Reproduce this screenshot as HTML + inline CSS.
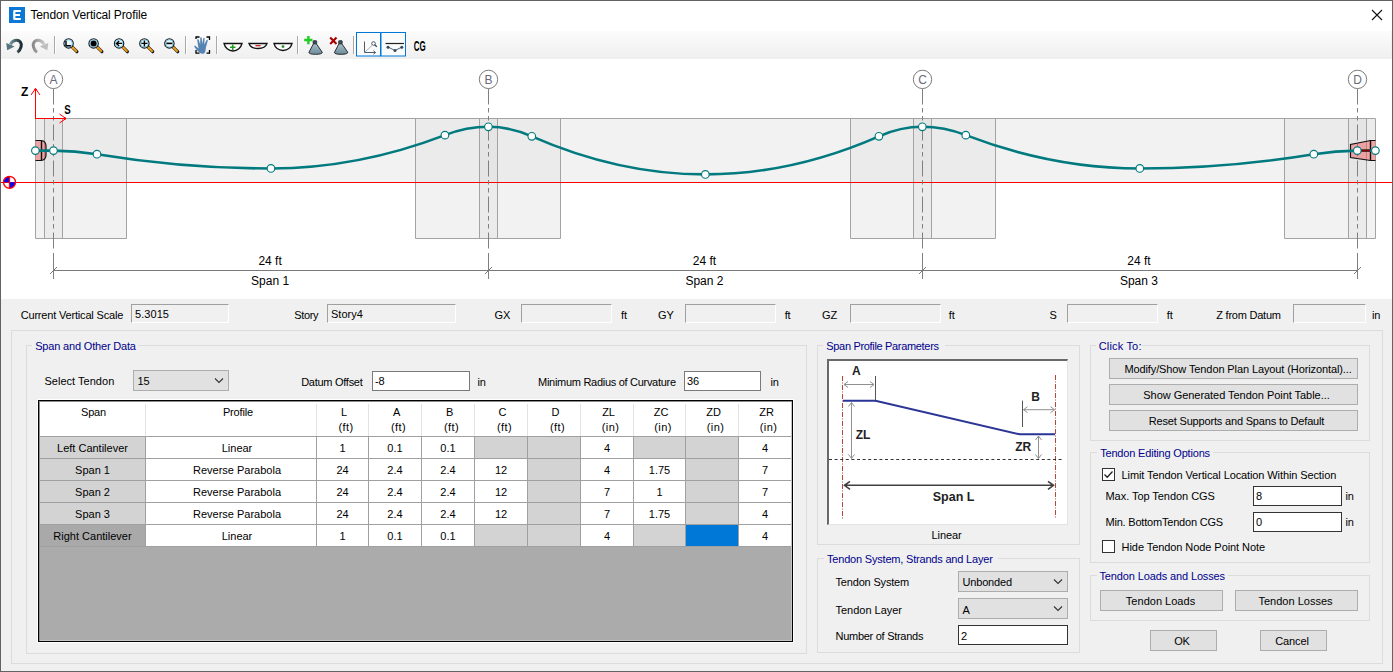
<!DOCTYPE html><html><head><meta charset="utf-8"><title>Tendon Vertical Profile</title><style>
html,body{margin:0;padding:0;}
body{width:1393px;height:672px;position:relative;overflow:hidden;background:#f0f0f0;font-family:"Liberation Sans", sans-serif;font-size:11px;}
.t{position:absolute;white-space:nowrap;letter-spacing:-0.15px;}
.b{position:absolute;box-sizing:border-box;}
svg{position:absolute;}
</style></head><body>
<div class="b" style="left:0px;top:0px;width:1393px;height:31px;background:#fff;"></div>
<svg style="left:9px;top:7px" width="16" height="16" viewBox="0 0 16 16"><rect width="16" height="16" fill="#0b78d6"/><path d="M4.2 4.2 Q4.2 3 5.6 3 L11.8 3 L11.8 5 L6.4 5 L6.4 7 L11 7 L11 9 L6.4 9 L6.4 11 L11.8 11 L11.8 13 L5.6 13 Q4.2 13 4.2 11.8 Z" fill="#fff"/></svg>
<div class="t" style="left:30.4px;top:8.34px;font-size:12px;line-height:15px;color:#000;letter-spacing:-0.12px;">Tendon Vertical Profile</div>
<svg style="left:1371px;top:9px" width="12" height="12" viewBox="0 0 12 12"><path d="M1 1 L11 11 M11 1 L1 11" stroke="#111" stroke-width="1.1"/></svg>
<div class="b" style="left:1px;top:31px;width:1390px;height:28px;background:linear-gradient(#fcfcfc,#efefef);"></div>
<div class="b" style="left:1px;top:59px;width:1391px;height:240px;background:#fff;"></div>
<div class="b" style="left:1px;top:299px;width:1391px;height:372px;background:#f0f0f0;"></div>
<svg style="left:0;top:0" width="1393" height="299" viewBox="0 0 1393 299">
<rect x="35.5" y="118.5" width="1340.0" height="63.80000000000001" fill="#f2f2f2"/>
<rect x="35.5" y="118.5" width="91.0" height="63.80000000000001" fill="#ebebeb"/>
<rect x="35.5" y="182.3" width="91.0" height="56.19999999999999" fill="#f2f2f2"/>
<rect x="415.5" y="118.5" width="145.0" height="63.80000000000001" fill="#ebebeb"/>
<rect x="415.5" y="182.3" width="145.0" height="56.19999999999999" fill="#f2f2f2"/>
<rect x="850.5" y="118.5" width="145.0" height="63.80000000000001" fill="#ebebeb"/>
<rect x="850.5" y="182.3" width="145.0" height="56.19999999999999" fill="#f2f2f2"/>
<rect x="1284.5" y="118.5" width="91.0" height="63.80000000000001" fill="#ebebeb"/>
<rect x="1284.5" y="182.3" width="91.0" height="56.19999999999999" fill="#f2f2f2"/>
<rect x="44.5" y="118.5" width="18.0" height="63.80000000000001" fill="#e5e5e5"/>
<rect x="44.5" y="182.3" width="18.0" height="56.19999999999999" fill="#ebebeb"/>
<rect x="479.5" y="118.5" width="18.0" height="63.80000000000001" fill="#e5e5e5"/>
<rect x="479.5" y="182.3" width="18.0" height="56.19999999999999" fill="#ebebeb"/>
<rect x="913.5" y="118.5" width="18.0" height="63.80000000000001" fill="#e5e5e5"/>
<rect x="913.5" y="182.3" width="18.0" height="56.19999999999999" fill="#ebebeb"/>
<rect x="1348.5" y="118.5" width="18.0" height="63.80000000000001" fill="#e5e5e5"/>
<rect x="1348.5" y="182.3" width="18.0" height="56.19999999999999" fill="#ebebeb"/>
<path d="M35.5 118.5 H1375.5 M35.5 118.5 V238.5 H126.5 V118.5 M415.5 118.5 V238.5 H560.5 V118.5 M850.5 118.5 V238.5 H995.5 V118.5 M1284.5 118.5 V238.5 H1375.5 V118.5 M44.5 118.5 V238.5 H62.5 V118.5 M479.5 118.5 V238.5 H497.5 V118.5 M913.5 118.5 V238.5 H931.5 V118.5 M1348.5 118.5 V238.5 H1366.5 V118.5" fill="none" stroke="#a3a3a3" stroke-width="1"/>
<path d="M1 182.5 H1392" stroke="#ff0000" stroke-width="1.2"/>
<path d="M53.5 88.5 V252" stroke="#808080" stroke-width="1" stroke-dasharray="16 3.5 4.5 3.5 4.5 4"/>
<path d="M53.5 253 V279" stroke="#808080" stroke-width="1"/>
<circle cx="53.5" cy="79.4" r="9.2" fill="#fff" stroke="#7c7c7c" stroke-width="1"/>
<text x="53.5" y="84" text-anchor="middle" font-family="Liberation Sans" font-size="12" fill="#6a6a7a">A</text>
<path d="M488.5 88.5 V252" stroke="#808080" stroke-width="1" stroke-dasharray="16 3.5 4.5 3.5 4.5 4"/>
<path d="M488.5 253 V279" stroke="#808080" stroke-width="1"/>
<circle cx="488.5" cy="79.4" r="9.2" fill="#fff" stroke="#7c7c7c" stroke-width="1"/>
<text x="488.5" y="84" text-anchor="middle" font-family="Liberation Sans" font-size="12" fill="#6a6a7a">B</text>
<path d="M922.5 88.5 V252" stroke="#808080" stroke-width="1" stroke-dasharray="16 3.5 4.5 3.5 4.5 4"/>
<path d="M922.5 253 V279" stroke="#808080" stroke-width="1"/>
<circle cx="922.5" cy="79.4" r="9.2" fill="#fff" stroke="#7c7c7c" stroke-width="1"/>
<text x="922.5" y="84" text-anchor="middle" font-family="Liberation Sans" font-size="12" fill="#6a6a7a">C</text>
<path d="M1357.5 88.5 V252" stroke="#808080" stroke-width="1" stroke-dasharray="16 3.5 4.5 3.5 4.5 4"/>
<path d="M1357.5 253 V279" stroke="#808080" stroke-width="1"/>
<circle cx="1357.5" cy="79.4" r="9.2" fill="#fff" stroke="#7c7c7c" stroke-width="1"/>
<text x="1357.5" y="84" text-anchor="middle" font-family="Liberation Sans" font-size="12" fill="#6a6a7a">D</text>
<path d="M53.5 270.5 H1357.5" stroke="#7a7a7a" stroke-width="1"/>
<path d="M50.0 274 L57.0 267" stroke="#7a7a7a" stroke-width="1"/>
<path d="M485.0 274 L492.0 267" stroke="#7a7a7a" stroke-width="1"/>
<path d="M919.0 274 L926.0 267" stroke="#7a7a7a" stroke-width="1"/>
<path d="M1354.0 274 L1361.0 267" stroke="#7a7a7a" stroke-width="1"/>
<text x="270.1" y="265" text-anchor="middle" font-family="Liberation Sans" font-size="12" fill="#000">24 ft</text>
<text x="270.1" y="285" text-anchor="middle" font-family="Liberation Sans" font-size="12" fill="#000">Span 1</text>
<text x="704.4" y="265" text-anchor="middle" font-family="Liberation Sans" font-size="12" fill="#000">24 ft</text>
<text x="704.4" y="285" text-anchor="middle" font-family="Liberation Sans" font-size="12" fill="#000">Span 2</text>
<text x="1138.9" y="265" text-anchor="middle" font-family="Liberation Sans" font-size="12" fill="#000">24 ft</text>
<text x="1138.9" y="285" text-anchor="middle" font-family="Liberation Sans" font-size="12" fill="#000">Span 3</text>
<path d="M35.5 119 V89 M31 95 L35.5 88.5 L40 95" fill="none" stroke="#ff0000" stroke-width="1"/><circle cx="35.5" cy="89.8" r="1.2" fill="#ff0000"/>
<path d="M35 118.5 H66 M59.5 114 L66 118.5 L59.5 123" fill="none" stroke="#ff0000" stroke-width="1"/><circle cx="64.8" cy="118.5" r="1.2" fill="#ff0000"/>
<text x="21" y="96" font-family="Liberation Sans" font-size="12" font-weight="bold" fill="#000">Z</text>
<text x="64.3" y="113.5" font-family="Liberation Sans" font-size="12" font-weight="bold" fill="#000" textLength="6.5" lengthAdjust="spacingAndGlyphs">S</text>
<g transform="translate(9.5 182.3)"><path d="M0 0 V-6 A6 6 0 0 0 -6 0 Z M0 0 V6 A6 6 0 0 0 6 0 Z" fill="#0000ff"/><circle r="6" fill="none" stroke="#ff0000" stroke-width="1.3"/><path d="M0 -6 V6" stroke="#ff0000" stroke-width="1.3"/></g>
<path d="M35.5 140.5 H41 Q46 141 46 146 V155 Q46 160 41 160.5 H35.5 Z" fill="rgb(240,80,80)" fill-opacity="0.45"/>
<path d="M35.5 140.5 H41 Q46 141 46 146 V155 Q46 160 41 160.5 H35.5" fill="none" stroke="#111" stroke-width="1.2"/>
<path d="M41.5 140.5 V160.5" stroke="#111" stroke-width="1.4"/>
<path d="M1350.5 144.5 L1370.5 140.5 H1375.5 V160.5 H1370.5 L1350.5 157.5 Z" fill="rgb(240,80,80)" fill-opacity="0.45"/>
<path d="M1375.5 140.5 H1370.5 L1350.5 144.5 V157.5 L1370.5 160.5 H1375.5" fill="none" stroke="#111" stroke-width="1.2"/>
<path d="M1370.5 140.5 V160.5" stroke="#111" stroke-width="1.4"/>
<path d="M35.4 150.60 L53.5 150.60 Q75.25 150.60 96.99 154.17 Q183.97 168.45 270.95 168.45 Q357.93 168.45 444.91 135.13 Q466.65 126.80 488.40 126.80 Q510.09 126.80 531.79 136.32 Q618.57 174.40 705.35 174.40 Q792.13 174.40 878.91 136.32 Q900.61 126.80 922.30 126.80 Q944.05 126.80 965.80 135.13 Q1052.80 168.45 1139.80 168.45 Q1226.80 168.45 1313.80 154.17 Q1335.55 150.60 1357.30 150.60 L1375.4 150.60" fill="none" stroke="#007a7e" stroke-width="2.6" stroke-linejoin="round"/>
<path d="M1357 150.60 H1370" stroke="#8a0000" stroke-width="2.2"/>
<path d="M1366 150.60 H1375.5" stroke="#007a7e" stroke-width="0"/>
<circle cx="35.40" cy="150.60" r="3.8" fill="#fff" stroke="#007a7e" stroke-width="1.15"/>
<circle cx="53.50" cy="150.60" r="3.8" fill="#fff" stroke="#007a7e" stroke-width="1.15"/>
<circle cx="96.99" cy="154.17" r="3.8" fill="#fff" stroke="#007a7e" stroke-width="1.15"/>
<circle cx="270.95" cy="168.45" r="3.8" fill="#fff" stroke="#007a7e" stroke-width="1.15"/>
<circle cx="444.91" cy="135.13" r="3.8" fill="#fff" stroke="#007a7e" stroke-width="1.15"/>
<circle cx="488.40" cy="126.80" r="3.8" fill="#fff" stroke="#007a7e" stroke-width="1.15"/>
<circle cx="531.79" cy="136.32" r="3.8" fill="#fff" stroke="#007a7e" stroke-width="1.15"/>
<circle cx="705.35" cy="174.40" r="3.8" fill="#fff" stroke="#007a7e" stroke-width="1.15"/>
<circle cx="878.91" cy="136.32" r="3.8" fill="#fff" stroke="#007a7e" stroke-width="1.15"/>
<circle cx="922.30" cy="126.80" r="3.8" fill="#fff" stroke="#007a7e" stroke-width="1.15"/>
<circle cx="965.80" cy="135.13" r="3.8" fill="#fff" stroke="#007a7e" stroke-width="1.15"/>
<circle cx="1139.80" cy="168.45" r="3.8" fill="#fff" stroke="#007a7e" stroke-width="1.15"/>
<circle cx="1313.80" cy="154.17" r="3.8" fill="#fff" stroke="#007a7e" stroke-width="1.15"/>
<circle cx="1357.30" cy="150.60" r="3.8" fill="#fff" stroke="#007a7e" stroke-width="1.15"/>
<circle cx="1375.40" cy="150.60" r="3.8" fill="#fff" stroke="#007a7e" stroke-width="1.15"/>
</svg>
<svg style="left:0;top:0" width="440" height="60" viewBox="0 0 440 60">
<defs><linearGradient id="ug" x1="0" y1="0" x2="1" y2="0"><stop offset="0" stop-color="#6f959e"/><stop offset="1" stop-color="#1b2a33"/></linearGradient><linearGradient id="rg" x1="0" y1="0" x2="1" y2="0"><stop offset="0" stop-color="#8a8a8a"/><stop offset="1" stop-color="#c8c8c8"/></linearGradient><linearGradient id="cone" x1="0" y1="0" x2="0" y2="1"><stop offset="0" stop-color="#aac0cc"/><stop offset="1" stop-color="#6a8a9a"/></linearGradient></defs>
<path d="M10.5 44.5 C12 40.5, 17.5 38.8, 20.3 42 C22.3 44.5, 21.2 49.2, 17.5 52.3" fill="none" stroke="url(#ug)" stroke-width="3"/>
<path d="M6.2 43 L14.6 46.4 L7.2 50.2 Z" fill="#56747d"/>
<path d="M44 44.5 C42.5 40.5, 37 38.8, 34.2 42 C32.2 44.5, 33.3 49.2, 37 52.3" fill="none" stroke="url(#rg)" stroke-width="3"/>
<path d="M48.3 43 L39.9 46.4 L47.3 50.2 Z" fill="#bdbdbd"/>
<path d="M54.5 36 V54" stroke="#a8a8a8" stroke-width="1"/><path d="M55.5 36 V54" stroke="#fff" stroke-width="1"/>
<path d="M185.5 36 V54" stroke="#a8a8a8" stroke-width="1"/><path d="M186.5 36 V54" stroke="#fff" stroke-width="1"/>
<path d="M216.5 36 V54" stroke="#a8a8a8" stroke-width="1"/><path d="M217.5 36 V54" stroke="#fff" stroke-width="1"/>
<path d="M297.5 36 V54" stroke="#a8a8a8" stroke-width="1"/><path d="M298.5 36 V54" stroke="#fff" stroke-width="1"/>
<path d="M353.5 36 V54" stroke="#a8a8a8" stroke-width="1"/><path d="M354.5 36 V54" stroke="#fff" stroke-width="1"/>
<path d="M72.6 47.4 L76.89999999999999 51.7" stroke="#1a1a1a" stroke-width="3.2" stroke-linecap="round"/>
<path d="M72.6 47.4 L76.19999999999999 51.0" stroke="#e59b1c" stroke-width="2.2" stroke-linecap="round"/>
<circle cx="68.6" cy="43.4" r="4.6" fill="#eef7fb" stroke="#1a1a1a" stroke-width="1.3"/>
<circle cx="68.6" cy="43.4" r="3.7" fill="none" stroke="#7dd0f2" stroke-width="1"/>
<path d="M66.0 40.8 V45.699999999999996 H70.89999999999999" fill="none" stroke="#000" stroke-width="1.4"/>
<path d="M97.6 47.4 L101.89999999999999 51.7" stroke="#1a1a1a" stroke-width="3.2" stroke-linecap="round"/>
<path d="M97.6 47.4 L101.19999999999999 51.0" stroke="#e59b1c" stroke-width="2.2" stroke-linecap="round"/>
<circle cx="93.6" cy="43.4" r="4.6" fill="#eef7fb" stroke="#1a1a1a" stroke-width="1.3"/>
<circle cx="93.6" cy="43.4" r="3.7" fill="none" stroke="#7dd0f2" stroke-width="1"/>
<circle cx="93.6" cy="43.4" r="3" fill="#000"/>
<path d="M123.1 47.4 L127.39999999999999 51.7" stroke="#1a1a1a" stroke-width="3.2" stroke-linecap="round"/>
<path d="M123.1 47.4 L126.69999999999999 51.0" stroke="#e59b1c" stroke-width="2.2" stroke-linecap="round"/>
<circle cx="119.1" cy="43.4" r="4.6" fill="#eef7fb" stroke="#1a1a1a" stroke-width="1.3"/>
<circle cx="119.1" cy="43.4" r="3.7" fill="none" stroke="#7dd0f2" stroke-width="1"/>
<path d="M122.1 43.4 H116.6 M119.1 40.9 L116.5 43.4 L119.1 45.9" fill="none" stroke="#000" stroke-width="1.4"/>
<path d="M148.4 47.4 L152.70000000000002 51.7" stroke="#1a1a1a" stroke-width="3.2" stroke-linecap="round"/>
<path d="M148.4 47.4 L152.0 51.0" stroke="#e59b1c" stroke-width="2.2" stroke-linecap="round"/>
<circle cx="144.4" cy="43.4" r="4.6" fill="#eef7fb" stroke="#1a1a1a" stroke-width="1.3"/>
<circle cx="144.4" cy="43.4" r="3.7" fill="none" stroke="#7dd0f2" stroke-width="1"/>
<path d="M141.4 43.4 H147.4 M144.4 40.4 V46.4" fill="none" stroke="#000" stroke-width="1.4"/>
<path d="M173.4 47.4 L177.70000000000002 51.7" stroke="#1a1a1a" stroke-width="3.2" stroke-linecap="round"/>
<path d="M173.4 47.4 L177.0 51.0" stroke="#e59b1c" stroke-width="2.2" stroke-linecap="round"/>
<circle cx="169.4" cy="43.4" r="4.6" fill="#eef7fb" stroke="#1a1a1a" stroke-width="1.3"/>
<circle cx="169.4" cy="43.4" r="3.7" fill="none" stroke="#7dd0f2" stroke-width="1"/>
<path d="M166.4 43.4 H172.4" fill="none" stroke="#000" stroke-width="1.6"/>
<path d="M196 39 V37 H199.5 M206.5 37 H209.5 V40 M196 50 V53.2 H199.5 M206.5 53.2 H209.5 V50" fill="none" stroke="#000" stroke-width="1.3"/>
<path d="M202.5 53.8 C199.5 53.5, 197.5 51, 194.5 47 C193.8 46, 195 45.5, 196 46.2 L198.5 48.5 L197.2 40 C197 39, 198.4 38.8, 198.7 39.8 L200.2 44.5 L200.2 38 C200.2 37, 201.6 37, 201.7 38 L202.2 44 L203.3 38.3 C203.5 37.3, 204.8 37.5, 204.6 38.5 L204.3 44.5 L206.5 40.2 C207 39.3, 208.2 39.6, 207.8 40.6 L205.8 48 C205.5 51.5, 205 53.8, 202.5 53.8 Z" fill="#5584b3"/>
<path d="M224 43.5 H242 C241 47.5, 237.5 51, 233 51 C228.5 51, 225 47.5, 224 43.5 Z" fill="#fff" stroke="#111" stroke-width="1.3"/>
<path d="M230 47.2 H235.5 M232.7 44.6 V50" stroke="#1e9a1e" stroke-width="1.5"/>
<path d="M249 43.5 H267 C266 46.5, 262.5 48.5, 258 48.5 C253.5 48.5, 250 46.5, 249 43.5 Z" fill="#fff" stroke="#111" stroke-width="1.3"/>
<path d="M255.4 45.7 H260.6" stroke="#d01818" stroke-width="1.3"/>
<path d="M274 43.5 H292 C291 47.5, 287.5 50.5, 283 50.5 C278.5 50.5, 275 47.5, 274 43.5 Z" fill="#fff" stroke="#111" stroke-width="1.3"/>
<circle cx="283" cy="46.6" r="1.4" fill="#1e8a2e"/>
<path d="M313.6 43.5 L316.2 43.5 L322.2 52.2 Q322.5 54.3, 315.5 54.3 Q308.6 54.3, 309 52.2 Z" fill="url(#cone)" stroke="#1e1e1e" stroke-width="0.9"/>
<rect x="313" y="40.6" width="3.8" height="3.4" rx="1" fill="#3a4d62" stroke="#1e1e1e" stroke-width="0.6"/>
<path d="M304.2 40 H312.5 M308.4 36 V44.3" stroke="#22cc22" stroke-width="2.4"/>
<path d="M339.1 43.5 L341.7 43.5 L347.7 52.2 Q348 54.3, 341 54.3 Q334.1 54.3, 334.5 52.2 Z" fill="url(#cone)" stroke="#1e1e1e" stroke-width="0.9"/>
<rect x="338.5" y="40.6" width="3.8" height="3.4" rx="1" fill="#3a4d62" stroke="#1e1e1e" stroke-width="0.6"/>
<path d="M330.2 37.6 L336.5 43.9 M336.5 37.6 L330.2 43.9" stroke="#a80000" stroke-width="2.1"/>
<rect x="356.5" y="32.5" width="24" height="23.5" fill="#fbfbfb" stroke="#0078d7" stroke-width="1"/>
<rect x="381" y="32.5" width="24.5" height="23.5" fill="#fbfbfb" stroke="#0078d7" stroke-width="1"/>
<path d="M364.5 41.5 V52.5 H375.5 M373.5 50.8 L375.5 52.5 L373.5 54.2" fill="none" stroke="#3a4a58" stroke-width="0.9"/>
<path d="M365 52 L372 45.5" stroke="#8fa0ad" stroke-width="0.8"/>
<circle cx="373.5" cy="43.5" r="1.8" fill="#fff" stroke="#3a4a58" stroke-width="0.9"/><path d="M374.8 44.8 L376.8 46.8" stroke="#3a4a58" stroke-width="1.3"/>
<path d="M385.5 43.5 H404" stroke="#222" stroke-width="1.2"/>
<path d="M388 47 L395 50.5 L402 47" fill="none" stroke="#4a6378" stroke-width="1"/>
<circle cx="388" cy="47.2" r="1.5" fill="#34495c"/><circle cx="395" cy="50.4" r="1.5" fill="#34495c"/><circle cx="401.8" cy="47.2" r="1.5" fill="#34495c"/>
<text x="413.8" y="51.2" font-family="Liberation Sans" font-size="13.8" font-weight="bold" fill="#000" textLength="12" lengthAdjust="spacingAndGlyphs">CG</text>
</svg>
<div class="t" style="left:20.70px;top:308.19px;font-size:11px;line-height:14px;color:#000;letter-spacing:-0.181px;">Current Vertical Scale</div>
<div class="b" style="left:131px;top:304px;width:98px;height:19px;background:#f0f0f0;border-top:1px solid #a0a0a0;border-left:1px solid #a0a0a0;border-bottom:1px solid #fff;border-right:1px solid #fff;"></div>
<div class="t" style="left:135.00px;top:306.99px;font-size:11px;line-height:14px;color:#000;letter-spacing:0.069px;">5.3015</div>
<div class="t" style="left:294.20px;top:308.19px;font-size:11px;line-height:14px;color:#000;letter-spacing:-0.347px;">Story</div>
<div class="b" style="left:327px;top:304px;width:129px;height:19px;background:#f0f0f0;border-top:1px solid #a0a0a0;border-left:1px solid #a0a0a0;border-bottom:1px solid #fff;border-right:1px solid #fff;"></div>
<div class="t" style="left:331.00px;top:306.99px;font-size:11px;line-height:14px;color:#000;letter-spacing:0.0px;">Story4</div>
<div class="t" style="left:494.50px;top:308.19px;font-size:11px;line-height:14px;color:#000;">GX</div>
<div class="b" style="left:521px;top:304px;width:91px;height:19px;background:#f0f0f0;border-top:1px solid #a0a0a0;border-left:1px solid #a0a0a0;border-bottom:1px solid #fff;border-right:1px solid #fff;"></div>
<div class="t" style="left:621.00px;top:308.19px;font-size:11px;line-height:14px;color:#000;">ft</div>
<div class="t" style="left:658.00px;top:308.19px;font-size:11px;line-height:14px;color:#000;">GY</div>
<div class="b" style="left:685px;top:304px;width:91px;height:19px;background:#f0f0f0;border-top:1px solid #a0a0a0;border-left:1px solid #a0a0a0;border-bottom:1px solid #fff;border-right:1px solid #fff;"></div>
<div class="t" style="left:784.70px;top:308.19px;font-size:11px;line-height:14px;color:#000;">ft</div>
<div class="t" style="left:822.00px;top:308.19px;font-size:11px;line-height:14px;color:#000;">GZ</div>
<div class="b" style="left:850px;top:304px;width:91px;height:19px;background:#f0f0f0;border-top:1px solid #a0a0a0;border-left:1px solid #a0a0a0;border-bottom:1px solid #fff;border-right:1px solid #fff;"></div>
<div class="t" style="left:948.80px;top:308.19px;font-size:11px;line-height:14px;color:#000;">ft</div>
<div class="t" style="left:1049.50px;top:308.19px;font-size:11px;line-height:14px;color:#000;">S</div>
<div class="b" style="left:1067px;top:304px;width:91px;height:19px;background:#f0f0f0;border-top:1px solid #a0a0a0;border-left:1px solid #a0a0a0;border-bottom:1px solid #fff;border-right:1px solid #fff;"></div>
<div class="t" style="left:1166.80px;top:308.19px;font-size:11px;line-height:14px;color:#000;">ft</div>
<div class="t" style="left:1216.30px;top:308.19px;font-size:11px;line-height:14px;color:#000;letter-spacing:-0.23px;">Z from Datum</div>
<div class="b" style="left:1293px;top:304px;width:73px;height:19px;background:#f0f0f0;border-top:1px solid #a0a0a0;border-left:1px solid #a0a0a0;border-bottom:1px solid #fff;border-right:1px solid #fff;"></div>
<div class="t" style="left:1372.00px;top:308.19px;font-size:11px;line-height:14px;color:#000;">in</div>
<div class="b" style="left:11px;top:330px;width:1372px;height:334px;border:1px solid #dcdcdc;"></div>
<div class="b" style="left:26px;top:345px;width:781px;height:309px;border:1px solid #dcdcdc;"></div>
<div class="b" style="left:32.2px;top:343px;width:105.8px;height:5px;background:#f0f0f0;"></div>
<div class="t" style="left:35.20px;top:339.39px;font-size:11px;line-height:14px;color:#00008c;letter-spacing:-0.176px;">Span and Other Data</div>
<div class="t" style="left:44.40px;top:374.19px;font-size:11px;line-height:14px;color:#000;letter-spacing:0.031px;">Select Tendon</div>
<div class="b" style="left:133px;top:370px;width:96px;height:21px;background:#e1e1e1;border:1px solid #adadad;"></div>
<div class="t" style="left:137.50px;top:373.69px;font-size:11px;line-height:14px;color:#000;">15</div>
<svg style="left:214px;top:377.0px" width="10" height="7" viewBox="0 0 10 7"><path d="M1 1.5 L5 5.5 L9 1.5" fill="none" stroke="#333" stroke-width="1.1"/></svg>
<div class="t" style="left:301.20px;top:374.69px;font-size:11px;line-height:14px;color:#000;letter-spacing:-0.274px;">Datum Offset</div>
<div class="b" style="left:372px;top:371px;width:98px;height:20px;background:#fff;border:1px solid #7a7a7a;"></div>
<div class="t" style="left:375.00px;top:374.19px;font-size:11px;line-height:14px;color:#000;">-8</div>
<div class="t" style="left:477.40px;top:374.69px;font-size:11px;line-height:14px;color:#000;">in</div>
<div class="t" style="left:538.10px;top:374.69px;font-size:11px;line-height:14px;color:#000;letter-spacing:-0.292px;">Minimum Radius of Curvature</div>
<div class="b" style="left:684px;top:371px;width:77px;height:20px;background:#fff;border:1px solid #7a7a7a;"></div>
<div class="t" style="left:687.00px;top:374.19px;font-size:11px;line-height:14px;color:#000;">36</div>
<div class="t" style="left:770.40px;top:374.69px;font-size:11px;line-height:14px;color:#000;">in</div>
<div class="b" style="left:37px;top:399px;width:757px;height:244px;border:1px solid #fff;"></div>
<div class="b" style="left:38px;top:400px;width:755px;height:242px;background:#ababab;border:1px solid #000;"></div>
<div class="b" style="left:39px;top:401px;width:753px;height:36px;background:#fff;"></div>
<svg style="left:0;top:0" width="1393" height="672" viewBox="0 0 1393 672">
<path d="M145.5 404 V436" stroke="#e3e3e3" stroke-width="1"/>
<path d="M316.5 404 V436" stroke="#e3e3e3" stroke-width="1"/>
<path d="M368.5 404 V436" stroke="#e3e3e3" stroke-width="1"/>
<path d="M421.5 404 V436" stroke="#e3e3e3" stroke-width="1"/>
<path d="M474.5 404 V436" stroke="#e3e3e3" stroke-width="1"/>
<path d="M527.5 404 V436" stroke="#e3e3e3" stroke-width="1"/>
<path d="M580.5 404 V436" stroke="#e3e3e3" stroke-width="1"/>
<path d="M633.5 404 V436" stroke="#e3e3e3" stroke-width="1"/>
<path d="M685.5 404 V436" stroke="#e3e3e3" stroke-width="1"/>
<path d="M738.5 404 V436" stroke="#e3e3e3" stroke-width="1"/>
<rect x="39.0" y="436.5" width="107.0" height="22.0" fill="#d3d3d3"/>
<rect x="145.0" y="436.5" width="172.0" height="22.0" fill="#fff"/>
<rect x="316.0" y="436.5" width="53.0" height="22.0" fill="#fff"/>
<rect x="368.0" y="436.5" width="54.0" height="22.0" fill="#fff"/>
<rect x="421.0" y="436.5" width="54.0" height="22.0" fill="#fff"/>
<rect x="474.0" y="436.5" width="54.0" height="22.0" fill="#d3d3d3"/>
<rect x="527.0" y="436.5" width="54.0" height="22.0" fill="#d3d3d3"/>
<rect x="580.0" y="436.5" width="54.0" height="22.0" fill="#fff"/>
<rect x="633.0" y="436.5" width="53.0" height="22.0" fill="#d3d3d3"/>
<rect x="685.0" y="436.5" width="54.0" height="22.0" fill="#d3d3d3"/>
<rect x="738.0" y="436.5" width="54.0" height="22.0" fill="#fff"/>
<rect x="39.0" y="458.5" width="107.0" height="22.0" fill="#d3d3d3"/>
<rect x="145.0" y="458.5" width="172.0" height="22.0" fill="#fff"/>
<rect x="316.0" y="458.5" width="53.0" height="22.0" fill="#fff"/>
<rect x="368.0" y="458.5" width="54.0" height="22.0" fill="#fff"/>
<rect x="421.0" y="458.5" width="54.0" height="22.0" fill="#fff"/>
<rect x="474.0" y="458.5" width="54.0" height="22.0" fill="#fff"/>
<rect x="527.0" y="458.5" width="54.0" height="22.0" fill="#d3d3d3"/>
<rect x="580.0" y="458.5" width="54.0" height="22.0" fill="#fff"/>
<rect x="633.0" y="458.5" width="53.0" height="22.0" fill="#fff"/>
<rect x="685.0" y="458.5" width="54.0" height="22.0" fill="#d3d3d3"/>
<rect x="738.0" y="458.5" width="54.0" height="22.0" fill="#fff"/>
<rect x="39.0" y="480.5" width="107.0" height="22.0" fill="#d3d3d3"/>
<rect x="145.0" y="480.5" width="172.0" height="22.0" fill="#fff"/>
<rect x="316.0" y="480.5" width="53.0" height="22.0" fill="#fff"/>
<rect x="368.0" y="480.5" width="54.0" height="22.0" fill="#fff"/>
<rect x="421.0" y="480.5" width="54.0" height="22.0" fill="#fff"/>
<rect x="474.0" y="480.5" width="54.0" height="22.0" fill="#fff"/>
<rect x="527.0" y="480.5" width="54.0" height="22.0" fill="#d3d3d3"/>
<rect x="580.0" y="480.5" width="54.0" height="22.0" fill="#fff"/>
<rect x="633.0" y="480.5" width="53.0" height="22.0" fill="#fff"/>
<rect x="685.0" y="480.5" width="54.0" height="22.0" fill="#d3d3d3"/>
<rect x="738.0" y="480.5" width="54.0" height="22.0" fill="#fff"/>
<rect x="39.0" y="502.5" width="107.0" height="22.0" fill="#d3d3d3"/>
<rect x="145.0" y="502.5" width="172.0" height="22.0" fill="#fff"/>
<rect x="316.0" y="502.5" width="53.0" height="22.0" fill="#fff"/>
<rect x="368.0" y="502.5" width="54.0" height="22.0" fill="#fff"/>
<rect x="421.0" y="502.5" width="54.0" height="22.0" fill="#fff"/>
<rect x="474.0" y="502.5" width="54.0" height="22.0" fill="#fff"/>
<rect x="527.0" y="502.5" width="54.0" height="22.0" fill="#d3d3d3"/>
<rect x="580.0" y="502.5" width="54.0" height="22.0" fill="#fff"/>
<rect x="633.0" y="502.5" width="53.0" height="22.0" fill="#fff"/>
<rect x="685.0" y="502.5" width="54.0" height="22.0" fill="#d3d3d3"/>
<rect x="738.0" y="502.5" width="54.0" height="22.0" fill="#fff"/>
<rect x="39.0" y="524.5" width="107.0" height="22.0" fill="#a9a9a9"/>
<rect x="145.0" y="524.5" width="172.0" height="22.0" fill="#fff"/>
<rect x="316.0" y="524.5" width="53.0" height="22.0" fill="#fff"/>
<rect x="368.0" y="524.5" width="54.0" height="22.0" fill="#fff"/>
<rect x="421.0" y="524.5" width="54.0" height="22.0" fill="#fff"/>
<rect x="474.0" y="524.5" width="54.0" height="22.0" fill="#d3d3d3"/>
<rect x="527.0" y="524.5" width="54.0" height="22.0" fill="#d3d3d3"/>
<rect x="580.0" y="524.5" width="54.0" height="22.0" fill="#fff"/>
<rect x="633.0" y="524.5" width="53.0" height="22.0" fill="#d3d3d3"/>
<rect x="685.0" y="524.5" width="54.0" height="22.0" fill="#0078d7"/>
<rect x="738.0" y="524.5" width="54.0" height="22.0" fill="#fff"/>
<path d="M39 436.5 H792 M39 458.5 H792 M39 480.5 H792 M39 502.5 H792 M39 524.5 H792 M39 546.5 H792 M145.5 436.5 V546.5 M316.5 436.5 V546.5 M368.5 436.5 V546.5 M421.5 436.5 V546.5 M474.5 436.5 V546.5 M527.5 436.5 V546.5 M580.5 436.5 V546.5 M633.5 436.5 V546.5 M685.5 436.5 V546.5 M738.5 436.5 V546.5" stroke="#a0a0a0" stroke-width="1"/>
<path d="M39 401.5 H792 M39.5 401 V641" stroke="#8c8c8c" stroke-width="1"/>
<path d="M40 640.5 H792 M791.5 402 V641" stroke="#c4c4c4" stroke-width="1"/>
</svg>
<div class="t" style="left:40.50px;width:106.00px;text-align:center;top:405.19px;font-size:11px;line-height:14px;color:#000;">Span</div>
<div class="t" style="left:152.50px;width:171.00px;text-align:center;top:405.19px;font-size:11px;line-height:14px;color:#000;">Profile</div>
<div class="t" style="left:318.00px;width:52.00px;text-align:center;top:405.19px;font-size:11px;line-height:14px;color:#000;">L</div>
<div class="t" style="left:320.00px;width:52.00px;text-align:center;top:419.89px;font-size:11px;line-height:14px;color:#000;letter-spacing:0.4px;">(ft)</div>
<div class="t" style="left:370.00px;width:53.00px;text-align:center;top:405.19px;font-size:11px;line-height:14px;color:#000;">A</div>
<div class="t" style="left:372.00px;width:53.00px;text-align:center;top:419.89px;font-size:11px;line-height:14px;color:#000;letter-spacing:0.4px;">(ft)</div>
<div class="t" style="left:423.00px;width:53.00px;text-align:center;top:405.19px;font-size:11px;line-height:14px;color:#000;">B</div>
<div class="t" style="left:425.00px;width:53.00px;text-align:center;top:419.89px;font-size:11px;line-height:14px;color:#000;letter-spacing:0.4px;">(ft)</div>
<div class="t" style="left:476.00px;width:53.00px;text-align:center;top:405.19px;font-size:11px;line-height:14px;color:#000;">C</div>
<div class="t" style="left:478.00px;width:53.00px;text-align:center;top:419.89px;font-size:11px;line-height:14px;color:#000;letter-spacing:0.4px;">(ft)</div>
<div class="t" style="left:529.00px;width:53.00px;text-align:center;top:405.19px;font-size:11px;line-height:14px;color:#000;">D</div>
<div class="t" style="left:531.00px;width:53.00px;text-align:center;top:419.89px;font-size:11px;line-height:14px;color:#000;letter-spacing:0.4px;">(ft)</div>
<div class="t" style="left:582.00px;width:53.00px;text-align:center;top:405.19px;font-size:11px;line-height:14px;color:#000;">ZL</div>
<div class="t" style="left:584.00px;width:53.00px;text-align:center;top:419.89px;font-size:11px;line-height:14px;color:#000;letter-spacing:0.4px;">(in)</div>
<div class="t" style="left:635.00px;width:52.00px;text-align:center;top:405.19px;font-size:11px;line-height:14px;color:#000;">ZC</div>
<div class="t" style="left:637.00px;width:52.00px;text-align:center;top:419.89px;font-size:11px;line-height:14px;color:#000;letter-spacing:0.4px;">(in)</div>
<div class="t" style="left:687.00px;width:53.00px;text-align:center;top:405.19px;font-size:11px;line-height:14px;color:#000;">ZD</div>
<div class="t" style="left:689.00px;width:53.00px;text-align:center;top:419.89px;font-size:11px;line-height:14px;color:#000;letter-spacing:0.4px;">(in)</div>
<div class="t" style="left:740.00px;width:53.00px;text-align:center;top:405.19px;font-size:11px;line-height:14px;color:#000;">ZR</div>
<div class="t" style="left:742.00px;width:53.00px;text-align:center;top:419.89px;font-size:11px;line-height:14px;color:#000;letter-spacing:0.4px;">(in)</div>
<div class="t" style="left:39.50px;width:106.00px;text-align:center;top:440.89px;font-size:11px;line-height:14px;color:#000;letter-spacing:0px;">Left Cantilever</div>
<div class="t" style="left:151.50px;width:171.00px;text-align:center;top:440.89px;font-size:11px;line-height:14px;color:#000;letter-spacing:0px;">Linear</div>
<div class="t" style="left:316.50px;width:52.00px;text-align:center;top:440.89px;font-size:11px;line-height:14px;color:#000;letter-spacing:0px;">1</div>
<div class="t" style="left:368.50px;width:53.00px;text-align:center;top:440.89px;font-size:11px;line-height:14px;color:#000;letter-spacing:0px;">0.1</div>
<div class="t" style="left:421.50px;width:53.00px;text-align:center;top:440.89px;font-size:11px;line-height:14px;color:#000;letter-spacing:0px;">0.1</div>
<div class="t" style="left:580.50px;width:53.00px;text-align:center;top:440.89px;font-size:11px;line-height:14px;color:#000;letter-spacing:0px;">4</div>
<div class="t" style="left:738.50px;width:53.00px;text-align:center;top:440.89px;font-size:11px;line-height:14px;color:#000;letter-spacing:0px;">4</div>
<div class="t" style="left:39.50px;width:106.00px;text-align:center;top:462.89px;font-size:11px;line-height:14px;color:#000;letter-spacing:0px;">Span 1</div>
<div class="t" style="left:151.50px;width:171.00px;text-align:center;top:462.89px;font-size:11px;line-height:14px;color:#000;letter-spacing:0px;">Reverse Parabola</div>
<div class="t" style="left:316.50px;width:52.00px;text-align:center;top:462.89px;font-size:11px;line-height:14px;color:#000;letter-spacing:0px;">24</div>
<div class="t" style="left:368.50px;width:53.00px;text-align:center;top:462.89px;font-size:11px;line-height:14px;color:#000;letter-spacing:0px;">2.4</div>
<div class="t" style="left:421.50px;width:53.00px;text-align:center;top:462.89px;font-size:11px;line-height:14px;color:#000;letter-spacing:0px;">2.4</div>
<div class="t" style="left:474.50px;width:53.00px;text-align:center;top:462.89px;font-size:11px;line-height:14px;color:#000;letter-spacing:0px;">12</div>
<div class="t" style="left:580.50px;width:53.00px;text-align:center;top:462.89px;font-size:11px;line-height:14px;color:#000;letter-spacing:0px;">4</div>
<div class="t" style="left:633.50px;width:52.00px;text-align:center;top:462.89px;font-size:11px;line-height:14px;color:#000;letter-spacing:0px;">1.75</div>
<div class="t" style="left:738.50px;width:53.00px;text-align:center;top:462.89px;font-size:11px;line-height:14px;color:#000;letter-spacing:0px;">7</div>
<div class="t" style="left:39.50px;width:106.00px;text-align:center;top:484.89px;font-size:11px;line-height:14px;color:#000;letter-spacing:0px;">Span 2</div>
<div class="t" style="left:151.50px;width:171.00px;text-align:center;top:484.89px;font-size:11px;line-height:14px;color:#000;letter-spacing:0px;">Reverse Parabola</div>
<div class="t" style="left:316.50px;width:52.00px;text-align:center;top:484.89px;font-size:11px;line-height:14px;color:#000;letter-spacing:0px;">24</div>
<div class="t" style="left:368.50px;width:53.00px;text-align:center;top:484.89px;font-size:11px;line-height:14px;color:#000;letter-spacing:0px;">2.4</div>
<div class="t" style="left:421.50px;width:53.00px;text-align:center;top:484.89px;font-size:11px;line-height:14px;color:#000;letter-spacing:0px;">2.4</div>
<div class="t" style="left:474.50px;width:53.00px;text-align:center;top:484.89px;font-size:11px;line-height:14px;color:#000;letter-spacing:0px;">12</div>
<div class="t" style="left:580.50px;width:53.00px;text-align:center;top:484.89px;font-size:11px;line-height:14px;color:#000;letter-spacing:0px;">7</div>
<div class="t" style="left:633.50px;width:52.00px;text-align:center;top:484.89px;font-size:11px;line-height:14px;color:#000;letter-spacing:0px;">1</div>
<div class="t" style="left:738.50px;width:53.00px;text-align:center;top:484.89px;font-size:11px;line-height:14px;color:#000;letter-spacing:0px;">7</div>
<div class="t" style="left:39.50px;width:106.00px;text-align:center;top:506.89px;font-size:11px;line-height:14px;color:#000;letter-spacing:0px;">Span 3</div>
<div class="t" style="left:151.50px;width:171.00px;text-align:center;top:506.89px;font-size:11px;line-height:14px;color:#000;letter-spacing:0px;">Reverse Parabola</div>
<div class="t" style="left:316.50px;width:52.00px;text-align:center;top:506.89px;font-size:11px;line-height:14px;color:#000;letter-spacing:0px;">24</div>
<div class="t" style="left:368.50px;width:53.00px;text-align:center;top:506.89px;font-size:11px;line-height:14px;color:#000;letter-spacing:0px;">2.4</div>
<div class="t" style="left:421.50px;width:53.00px;text-align:center;top:506.89px;font-size:11px;line-height:14px;color:#000;letter-spacing:0px;">2.4</div>
<div class="t" style="left:474.50px;width:53.00px;text-align:center;top:506.89px;font-size:11px;line-height:14px;color:#000;letter-spacing:0px;">12</div>
<div class="t" style="left:580.50px;width:53.00px;text-align:center;top:506.89px;font-size:11px;line-height:14px;color:#000;letter-spacing:0px;">7</div>
<div class="t" style="left:633.50px;width:52.00px;text-align:center;top:506.89px;font-size:11px;line-height:14px;color:#000;letter-spacing:0px;">1.75</div>
<div class="t" style="left:738.50px;width:53.00px;text-align:center;top:506.89px;font-size:11px;line-height:14px;color:#000;letter-spacing:0px;">4</div>
<div class="t" style="left:39.50px;width:106.00px;text-align:center;top:528.89px;font-size:11px;line-height:14px;color:#000;letter-spacing:0px;">Right Cantilever</div>
<div class="t" style="left:151.50px;width:171.00px;text-align:center;top:528.89px;font-size:11px;line-height:14px;color:#000;letter-spacing:0px;">Linear</div>
<div class="t" style="left:316.50px;width:52.00px;text-align:center;top:528.89px;font-size:11px;line-height:14px;color:#000;letter-spacing:0px;">1</div>
<div class="t" style="left:368.50px;width:53.00px;text-align:center;top:528.89px;font-size:11px;line-height:14px;color:#000;letter-spacing:0px;">0.1</div>
<div class="t" style="left:421.50px;width:53.00px;text-align:center;top:528.89px;font-size:11px;line-height:14px;color:#000;letter-spacing:0px;">0.1</div>
<div class="t" style="left:580.50px;width:53.00px;text-align:center;top:528.89px;font-size:11px;line-height:14px;color:#000;letter-spacing:0px;">4</div>
<div class="t" style="left:738.50px;width:53.00px;text-align:center;top:528.89px;font-size:11px;line-height:14px;color:#000;letter-spacing:0px;">4</div>
<div class="b" style="left:817px;top:345px;width:263px;height:200px;border:1px solid #dcdcdc;"></div>
<div class="b" style="left:823.3px;top:343px;width:122.0px;height:5px;background:#f0f0f0;"></div>
<div class="t" style="left:826.30px;top:339.19px;font-size:11px;line-height:14px;color:#00008c;letter-spacing:-0.325px;">Span Profile Parameters</div>
<div class="b" style="left:827px;top:359px;width:241px;height:166px;background:#fff;border-top:2px solid #696969;border-left:2px solid #696969;border-right:1px solid #e3e3e3;border-bottom:1px solid #e3e3e3;"></div>
<svg style="left:0;top:0" width="1393" height="672" viewBox="0 0 1393 672"><path d="M842.5 376 V519 M1055.5 375 V519" stroke="#b5473a" stroke-width="1" stroke-dasharray="5 1.5 1 1.5"/><path d="M829 459.5 H1064" stroke="#333" stroke-width="1.2" stroke-dasharray="3 2.6"/><path d="M843 400.7 H875.5 L1019.7 434.3 H1055" fill="none" stroke="#2b3596" stroke-width="2"/><path d="M875.5 376 V400 M1022.5 400.6 V427" stroke="#555" stroke-width="1"/><path d="M844 384.5 H874 M848 381.5 L844 384.5 L848 387.5 M870 381.5 L874 384.5 L870 387.5" fill="none" stroke="#909090" stroke-width="1"/><path d="M1023.5 409.7 H1054.5 M1027.5 406.7 L1023.5 409.7 L1027.5 412.7 M1050.5 406.7 L1054.5 409.7 L1050.5 412.7" fill="none" stroke="#909090" stroke-width="1"/><path d="M851.5 402.5 V458.5 M848.5 406.5 L851.5 402.5 L854.5 406.5 M848.5 454.5 L851.5 458.5 L854.5 454.5" fill="none" stroke="#909090" stroke-width="1"/><path d="M1038.5 436 V458.5 M1035.5 440 L1038.5 436 L1041.5 440 M1035.5 454.5 L1038.5 458.5 L1041.5 454.5" fill="none" stroke="#909090" stroke-width="1"/><path d="M845 485.3 H1053 M850 481.3 L844.5 485.3 L850 489.3 M1048 481.3 L1053.5 485.3 L1048 489.3" fill="none" stroke="#404040" stroke-width="1.6"/><text x="856.3" y="375.3" text-anchor="middle" font-family="Liberation Sans" font-size="12" font-weight="bold" fill="#222">A</text><text x="1035.7" y="400.6" text-anchor="middle" font-family="Liberation Sans" font-size="12" font-weight="bold" fill="#222">B</text><text x="863" y="439.4" text-anchor="middle" font-family="Liberation Sans" font-size="12" font-weight="bold" fill="#222">ZL</text><text x="1023.2" y="450.6" text-anchor="middle" font-family="Liberation Sans" font-size="12" font-weight="bold" fill="#222">ZR</text><text x="953.6" y="501.3" text-anchor="middle" font-family="Liberation Sans" font-size="12.5" font-weight="bold" fill="#222">Span L</text></svg>
<div class="t" style="left:900.00px;width:93.00px;text-align:center;top:528.39px;font-size:11px;line-height:14px;color:#000;letter-spacing:-0.116px;">Linear</div>
<div class="b" style="left:817px;top:558px;width:263px;height:95px;border:1px solid #dcdcdc;"></div>
<div class="b" style="left:824px;top:556px;width:174px;height:5px;background:#f0f0f0;"></div>
<div class="t" style="left:827.00px;top:552.19px;font-size:11px;line-height:14px;color:#00008c;letter-spacing:-0.194px;">Tendon System, Strands and Layer</div>
<div class="t" style="left:835.50px;top:575.19px;font-size:11px;line-height:14px;color:#000;letter-spacing:-0.177px;">Tendon System</div>
<div class="b" style="left:958px;top:571px;width:110px;height:21px;background:#e1e1e1;border:1px solid #adadad;"></div>
<div class="t" style="left:962.50px;top:575.19px;font-size:11px;line-height:14px;color:#000;letter-spacing:-0.169px;">Unbonded</div>
<svg style="left:1053px;top:578.0px" width="10" height="7" viewBox="0 0 10 7"><path d="M1 1.5 L5 5.5 L9 1.5" fill="none" stroke="#333" stroke-width="1.1"/></svg>
<div class="t" style="left:835.50px;top:603.19px;font-size:11px;line-height:14px;color:#000;letter-spacing:-0.016px;">Tendon Layer</div>
<div class="b" style="left:958px;top:598px;width:110px;height:21px;background:#e1e1e1;border:1px solid #adadad;"></div>
<div class="t" style="left:962.50px;top:602.69px;font-size:11px;line-height:14px;color:#000;">A</div>
<svg style="left:1053px;top:605.0px" width="10" height="7" viewBox="0 0 10 7"><path d="M1 1.5 L5 5.5 L9 1.5" fill="none" stroke="#333" stroke-width="1.1"/></svg>
<div class="t" style="left:835.50px;top:628.69px;font-size:11px;line-height:14px;color:#000;letter-spacing:-0.277px;">Number of Strands</div>
<div class="b" style="left:958px;top:625px;width:110px;height:20px;background:#fff;border:1px solid #333;"></div>
<div class="t" style="left:961.00px;top:628.69px;font-size:11px;line-height:14px;color:#000;">2</div>
<div class="b" style="left:1090px;top:345px;width:280px;height:96px;border:1px solid #dcdcdc;"></div>
<div class="b" style="left:1095.75px;top:343px;width:46.0px;height:5px;background:#f0f0f0;"></div>
<div class="t" style="left:1098.75px;top:338.99px;font-size:11px;line-height:14px;color:#00008c;letter-spacing:0.166px;">Click To:</div>
<div class="b" style="left:1109px;top:358px;width:249px;height:21px;background:#e1e1e1;border:1px solid #adadad;"></div>
<div class="t" style="left:1124.40px;top:362.19px;font-size:11px;line-height:14px;color:#000;letter-spacing:-0.106px;">Modify/Show Tendon Plan Layout (Horizontal)...</div>
<div class="b" style="left:1109px;top:384px;width:249px;height:21px;background:#e1e1e1;border:1px solid #adadad;"></div>
<div class="t" style="left:1112.00px;width:249.00px;text-align:center;top:388.19px;font-size:11px;line-height:14px;color:#000;letter-spacing:-0.044px;">Show Generated Tendon Point Table...</div>
<div class="b" style="left:1109px;top:410px;width:249px;height:21px;background:#e1e1e1;border:1px solid #adadad;"></div>
<div class="t" style="left:1112.00px;width:249.00px;text-align:center;top:414.19px;font-size:11px;line-height:14px;color:#000;letter-spacing:-0.177px;">Reset Supports and Spans to Default</div>
<div class="b" style="left:1090px;top:452px;width:280px;height:111px;border:1px solid #dcdcdc;"></div>
<div class="b" style="left:1097.2px;top:450px;width:116.0px;height:5px;background:#f0f0f0;"></div>
<div class="t" style="left:1100.20px;top:446.19px;font-size:11px;line-height:14px;color:#00008c;letter-spacing:-0.183px;">Tendon Editing Options</div>
<div class="b" style="left:1102px;top:468px;width:13px;height:13px;background:#fff;border:1px solid #333;"></div>
<svg style="left:1102px;top:468px" width="13" height="13" viewBox="0 0 13 13"><path d="M2.5 6.5 L5.2 9.2 L10.5 3.5" fill="none" stroke="#222" stroke-width="1.3"/></svg>
<div class="t" style="left:1121.60px;top:468.19px;font-size:11px;line-height:14px;color:#000;letter-spacing:-0.105px;">Limit Tendon Vertical Location Within Section</div>
<div class="t" style="left:1105.50px;top:488.69px;font-size:11px;line-height:14px;color:#000;letter-spacing:-0.049px;">Max. Top Tendon CGS</div>
<div class="b" style="left:1253px;top:486px;width:89px;height:20px;background:#fff;border:1px solid #333;"></div>
<div class="t" style="left:1256.00px;top:489.19px;font-size:11px;line-height:14px;color:#000;">8</div>
<div class="t" style="left:1345.50px;top:489.19px;font-size:11px;line-height:14px;color:#000;">in</div>
<div class="t" style="left:1105.50px;top:514.89px;font-size:11px;line-height:14px;color:#000;letter-spacing:-0.204px;">Min. BottomTendon CGS</div>
<div class="b" style="left:1253px;top:512px;width:89px;height:20px;background:#fff;border:1px solid #333;"></div>
<div class="t" style="left:1256.00px;top:515.19px;font-size:11px;line-height:14px;color:#000;">0</div>
<div class="t" style="left:1345.50px;top:515.19px;font-size:11px;line-height:14px;color:#000;">in</div>
<div class="b" style="left:1102px;top:540px;width:13px;height:13px;background:#fff;border:1px solid #333;"></div>
<div class="t" style="left:1121.60px;top:540.19px;font-size:11px;line-height:14px;color:#000;letter-spacing:-0.071px;">Hide Tendon Node Point Note</div>
<div class="b" style="left:1090px;top:575px;width:280px;height:46px;border:1px solid #dcdcdc;"></div>
<div class="b" style="left:1096.5px;top:573px;width:131.0px;height:5px;background:#f0f0f0;"></div>
<div class="t" style="left:1099.50px;top:569.29px;font-size:11px;line-height:14px;color:#00008c;letter-spacing:-0.129px;">Tendon Loads and Losses</div>
<div class="b" style="left:1100px;top:590px;width:123px;height:21px;background:#e1e1e1;border:1px solid #adadad;"></div>
<div class="t" style="left:1099.00px;width:123.00px;text-align:center;top:593.89px;font-size:11px;line-height:14px;color:#000;letter-spacing:0.016px;">Tendon Loads</div>
<div class="b" style="left:1235px;top:590px;width:123px;height:21px;background:#e1e1e1;border:1px solid #adadad;"></div>
<div class="t" style="left:1234.00px;width:123.00px;text-align:center;top:593.89px;font-size:11px;line-height:14px;color:#000;letter-spacing:0.016px;">Tendon Losses</div>
<div class="b" style="left:1150px;top:630px;width:67px;height:21px;background:#e1e1e1;border:1px solid #adadad;"></div>
<div class="t" style="left:1148.50px;width:67.00px;text-align:center;top:634.19px;font-size:11px;line-height:14px;color:#000;">OK</div>
<div class="b" style="left:1260px;top:630px;width:67px;height:21px;background:#e1e1e1;border:1px solid #adadad;"></div>
<div class="t" style="left:1258.50px;width:67.00px;text-align:center;top:634.19px;font-size:11px;line-height:14px;color:#000;">Cancel</div>
<div class="b" style="left:0px;top:0px;width:1393px;height:672px;border:1px solid #636363;"></div>
</body></html>
